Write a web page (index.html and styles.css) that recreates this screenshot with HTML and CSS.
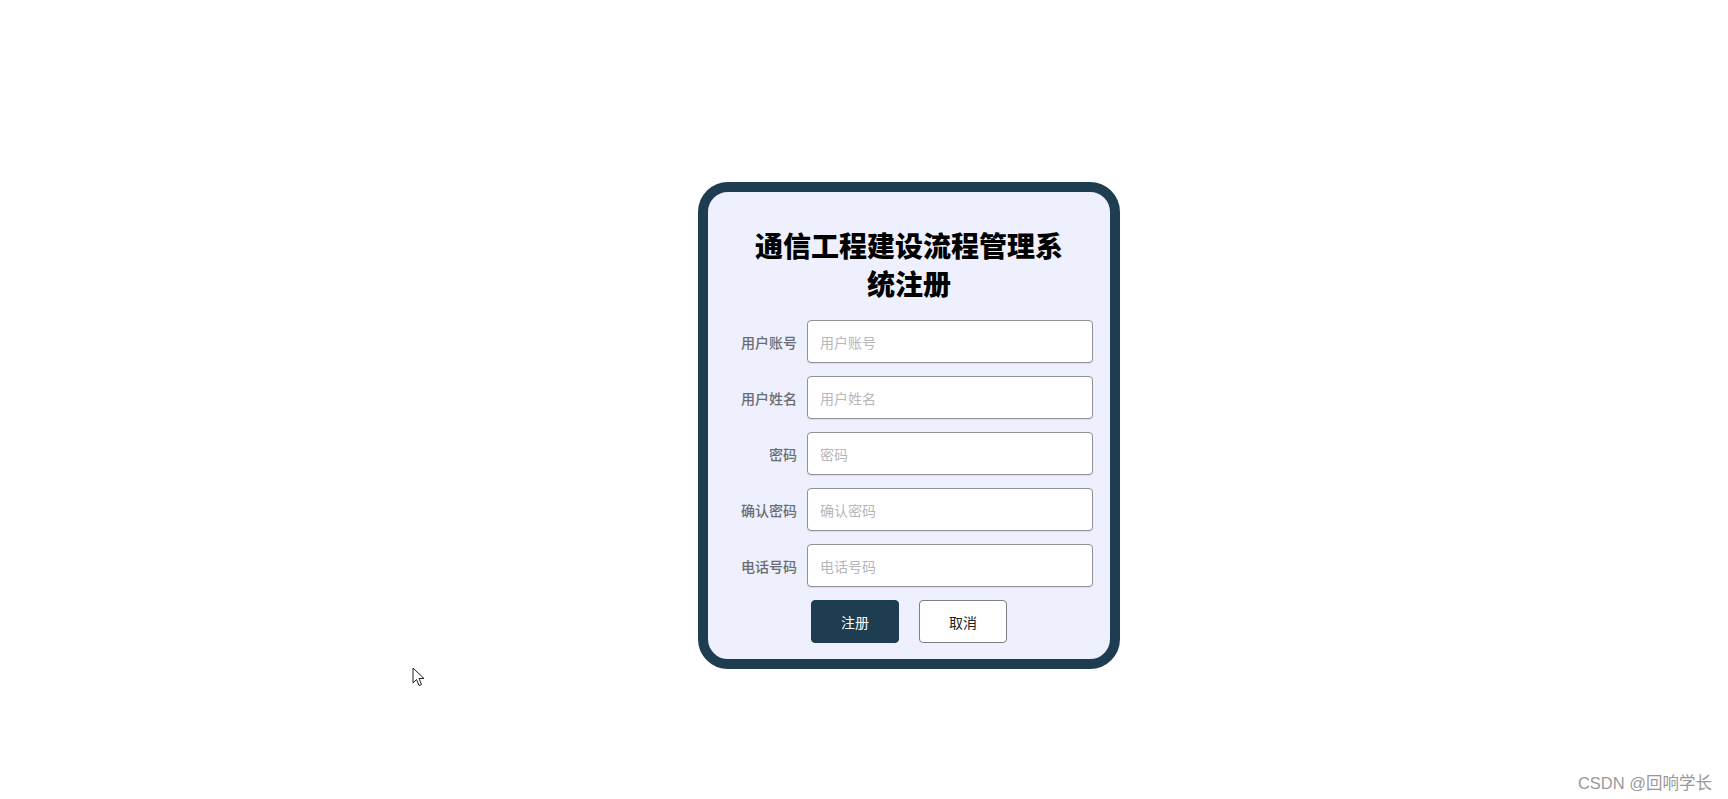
FILE: index.html
```html
<!DOCTYPE html>
<html lang="zh-CN">
<head>
<meta charset="utf-8">
<title>通信工程建设流程管理系统注册</title>
<link rel="stylesheet" href="styles.css">
</head>
<body>
<div class="page">
  <div class="card">
    <h1 class="title">通信工程建设流程管理系统注册</h1>
    <form class="form">
      <div class="row"><label class="label">用户账号</label><input class="input" type="text" placeholder="用户账号"></div>
      <div class="row"><label class="label">用户姓名</label><input class="input" type="text" placeholder="用户姓名"></div>
      <div class="row"><label class="label">密码</label><input class="input" type="password" placeholder="密码"></div>
      <div class="row"><label class="label">确认密码</label><input class="input" type="password" placeholder="确认密码"></div>
      <div class="row"><label class="label">电话号码</label><input class="input" type="text" placeholder="电话号码"></div>
      <div class="actions">
        <button class="btn btn-primary" type="button">注册</button>
        <button class="btn btn-plain" type="button">取消</button>
      </div>
    </form>
  </div>
</div>
<svg class="cursor" width="14" height="20" viewBox="0 0 14 20"><path d="M1 1 L1 16 L4.5 12.5 L7 18.5 L9.5 17.5 L7 11.5 L12 11.5 Z" fill="#fff" stroke="#222" stroke-width="1" stroke-linejoin="round"/></svg>
<div class="watermark">CSDN @回响学长</div>
</body>
</html>
```

FILE: styles.css
```css
* { box-sizing: border-box; }
html, body {
  margin: 0;
  padding: 0;
  background: #ffffff;
  height: 100%;
  overflow: hidden;
}
body {
  font-family: "Noto Sans CJK SC", "Noto Sans", "Liberation Sans", sans-serif;
  position: relative;
}
.page {
  padding: 182px 0 0 698px;
}
.card {
  width: 422px;
  height: 487px;
  border: 10px solid #1f3d51;
  border-radius: 30px;
  background: #eef0fd;
  padding: 34px 17px 0 10px;
}
.title {
  margin: 0 auto;
  width: 322px;
  padding-left: 7px;
  font-size: 28px;
  line-height: 38px;
  font-weight: 900;
  color: #000;
  text-align: center;
}
.form {
  margin-top: 18px;
}
.row {
  display: grid;
  grid-template-columns: 89px 286px;
  align-items: center;
  margin-bottom: 13px;
}
.label {
  text-align: right;
  padding-right: 10px;
  font-size: 14px;
  color: #6a6c72;
  font-weight: 500;
}
.input {
  width: 286px;
  height: 43px;
  border: 1px solid #909199;
  border-radius: 4px;
  background: #fff;
  padding: 0 12px;
  font-family: inherit;
  font-size: 14px;
  color: #333;
  outline: none;
  box-shadow: 0 1px 1px rgba(0,0,0,0.08);
}
.input::placeholder {
  color: #b5b7bd;
}
.actions {
  display: flex;
  gap: 20px;
  padding-left: 93px;
}
.btn {
  width: 88px;
  height: 43px;
  border-radius: 4px;
  font-family: inherit;
  font-size: 14px;
  cursor: pointer;
}
.btn-primary {
  background: #1f3d51;
  border: 1px solid #1f3d51;
  color: #fff;
}
.btn-plain {
  background: #fff;
  border: 1px solid #7b7e86;
  color: #222;
}
.cursor {
  position: absolute;
  left: 412px;
  top: 667px;
}
.watermark {
  position: absolute;
  right: 16px;
  top: 770px;
  font-size: 16.5px;
  color: #999;
  font-family: "Liberation Sans", "Noto Sans CJK SC", sans-serif;
}
```
